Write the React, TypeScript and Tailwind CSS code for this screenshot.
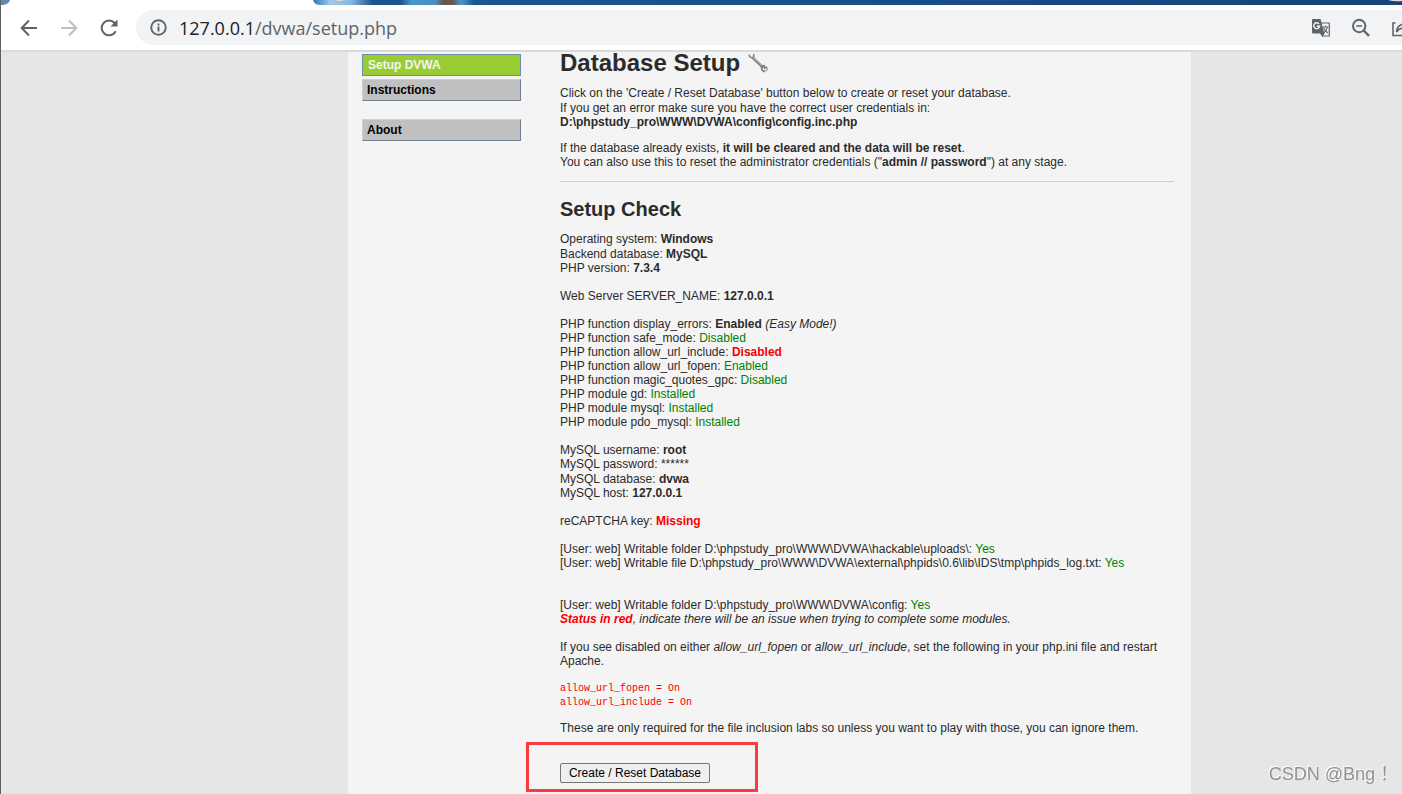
import type { ReactNode } from 'react';

function Good({ children }: { children: ReactNode }) {
  return <span className="text-[#008000]">{children}</span>;
}

function Bad({ children }: { children: ReactNode }) {
  return <span className="font-bold text-[#f80000]">{children}</span>;
}

function TabStrip() {
  return (
    <div className="flex h-[5px] shrink-0 justify-between overflow-hidden">
      <svg className="h-[5px] w-3 shrink-0" viewBox="0 0 12 5" aria-hidden="true">
        <path d="M0 0h9C8 3 5 5 0 5z" fill="#6484b4" />
      </svg>
      <div className="w-[300px] shrink-0" />
      <svg className="h-[5px] min-w-0 flex-1" viewBox="0 0 1090 5" preserveAspectRatio="none" aria-hidden="true">
        <defs>
          <linearGradient id="sky" x1="0" x2="1">
            <stop offset="0" stopColor="#2878b8" />
            <stop offset="0.016" stopColor="#a4c8e6" />
            <stop offset="0.035" stopColor="#86b6de" />
            <stop offset="0.055" stopColor="#1c5290" />
            <stop offset="0.08" stopColor="#1c5290" />
            <stop offset="0.09" stopColor="#4694cc" />
            <stop offset="0.112" stopColor="#4a90c4" />
            <stop offset="0.12" stopColor="#6b564c" />
            <stop offset="0.128" stopColor="#6b564c" />
            <stop offset="0.136" stopColor="#4898d0" />
            <stop offset="0.148" stopColor="#1c5694" />
            <stop offset="1" stopColor="#174478" />
          </linearGradient>
        </defs>
        <path d="M0 0h1090v5H8C3 5 1 3 0 0z" fill="url(#sky)" />
        <path d="M22 0h10q-5 2-10 0M1076 0h14v1q-7 1-14-1" fill="#e8ddd4" />
      </svg>
    </div>
  );
}

function Toolbar() {
  return (
    <header className="flex h-[47px] shrink-0 items-center border-b-2 border-[#dadada] bg-white pl-[18px] text-[#5f6368]">
      <button type="button" aria-label="Back" className="mr-5 size-5">
        <svg viewBox="0 0 20 20" className="size-5" fill="none" stroke="currentColor" strokeWidth="2">
          <path d="M18 10H3M10 2.500 2.700 10l7.300 7.500" />
        </svg>
      </button>
      <button type="button" aria-label="Forward" className="mr-5 size-5 text-[#bdbfc1]">
        <svg viewBox="0 0 20 20" className="size-5" fill="none" stroke="currentColor" strokeWidth="2">
          <path d="M2 10h15M10 2.500l7.300 7.500-7.300 7.500" />
        </svg>
      </button>
      <button type="button" aria-label="Reload" className="mr-[17px] size-5">
        <svg viewBox="0 0 20 20" className="size-5" fill="none" stroke="currentColor" strokeWidth="2">
          <path d="M16.700 13.200A7.400 7.400 0 1 1 15.600 5" />
          <path d="M18.500 1.500v7h-7z" fill="currentColor" stroke="none" />
        </svg>
      </button>
      <div className="flex h-[35px] min-w-0 flex-1 items-center overflow-hidden rounded-l-full bg-[#f1f3f4] pl-[14px]">
        <svg viewBox="0 0 18 18" className="mr-3 size-[17px] shrink-0" fill="none" stroke="currentColor" strokeWidth="2" aria-hidden="true">
          <circle cx="9" cy="9" r="7.700" />
          <path d="M9 8v5.200M9 4.800v2" />
        </svg>
        <a href="#setup" className="min-w-0 flex-1 font-['Open_Sans',sans-serif] text-[18px] leading-6">
          <span className="text-[#202124]">127.0.0.1</span>/dvwa/setup.php
        </a>
        <button type="button" aria-label="Translate this page" className="mr-5 size-5 shrink-0">
          <svg viewBox="0 0 20 20" className="size-5">
            <path d="M9 5h9.300v13H11" fill="#f1f3f4" stroke="currentColor" strokeWidth="1.200" />
            <path d="M2 1h7.500l4 14.500H2q-1 0-1-1V2q0-1 1-1M9 15.500h4.500l-2 3.500z" fill="currentColor" />
            <path d="M8 6A2.900 2.900 0 1 0 8.500 8.300H5.800" fill="none" stroke="#f1f3f4" strokeWidth="1.500" />
            <path d="M11.500 9H17.500M14.500 7.500v1.500M16.500 9q-.8 3.500-3.700 6M12.700 10q1.500 3 4 5" fill="none" stroke="currentColor" strokeWidth="1.100" />
          </svg>
        </button>
        <button type="button" aria-label="Zoom" className="mr-5 size-5 shrink-0">
          <svg viewBox="0 0 20 20" className="size-5" fill="none" stroke="currentColor" strokeWidth="2">
            <circle cx="8.200" cy="8" r="6.200" />
            <path d="m12.700 12.500 5.300 5.300" strokeWidth="2.400" />
            <path d="M5.200 8h6" strokeWidth="1.600" />
          </svg>
        </button>
        <button type="button" aria-label="Share" className="h-5 w-[11px] shrink-0 overflow-hidden">
          <svg viewBox="0 0 20 20" className="size-5" fill="none" stroke="currentColor" strokeWidth="1.600">
            <path d="M4.500 5H2v12.500h15v-3M5.500 14q.5-7 7.500-8V2.500l6 6-6 5V10q-5 0-7.500 4z" />
          </svg>
        </button>
      </div>
    </header>
  );
}

function Sidebar() {
  const item =
    'block h-[22px] border border-t-[#d0d0d0] border-r-[#708090] border-b-[#708090] border-l-[#d0d0d0] bg-[#c0c0c0] px-1 leading-5 font-bold text-black';
  return (
    <nav className="w-[159px] shrink-0 pt-0.5 text-[12px]">
      <a href="#setup" className="block h-[22px] border border-[#708db0] bg-[#99cc33] px-[5px] leading-5 font-bold text-[#f4f4f4]">
        Setup DVWA
      </a>
      <a href="#instructions" className={`${item} mt-[3px]`}>Instructions</a>
      <a href="#about" className={`${item} mt-[18px]`}>About</a>
    </nav>
  );
}

function Wrench() {
  return (
    <svg viewBox="0 0 20 20" className="ml-2 h-5 w-5" aria-hidden="true">
      <path d="m4.500 4.500 10.500 10" stroke="#858585" strokeWidth="2.600" />
      <path d="m5.500 4.700 9.500 9" stroke="#b8b8b8" strokeWidth="0.800" />
      <path d="M1 1.500q.5 3.200 3.500 3.300Q6.500 3.500 5.500 1" fill="none" stroke="#8a8a8a" strokeWidth="1.600" />
      <path d="M19 14.200l-2.300.8-.7-2.300q-2.600.3-2.300 2.800t3 3" fill="none" stroke="#7c7c7c" strokeWidth="1.800" />
      <path d="m17 18.500 2.200-1.500v-2.500" fill="none" stroke="#a0a0a0" strokeWidth="1.200" />
    </svg>
  );
}

export default function App() {
  return (
    <div className="flex h-screen flex-col overflow-hidden border-l border-[#606060] bg-white font-['Liberation_Sans',Arial,sans-serif]">
      <TabStrip />
      <Toolbar />
      <div className="min-h-0 flex-1 overflow-hidden bg-[#e6e6e6] pl-[347px]">
        <div className="flex min-h-full w-[843px] max-w-full bg-[#f4f4f4] pl-[14px]">
          <Sidebar />
          <main className="ml-[39px] w-[614px] text-[12px] leading-[14px] text-[#2b2b2b]">
            <h1 className="flex h-[22px] items-center text-[24px] leading-[22px] font-bold">
              Database Setup <Wrench />
            </h1>
            <p className="mt-3">
              Click on the 'Create / Reset Database' button below to create or reset your database.
            </p>
            <p className="mt-px">
              If you get an error make sure you have the correct user credentials in:
              <br />
              <strong>D:\phpstudy_pro\WWW\DVWA\config\config.inc.php</strong>
            </p>
            <p className="mt-3">
              If the database already exists, <strong>it will be cleared and the data will be reset</strong>.
              <br />
              You can also use this to reset the administrator credentials ("<strong>admin // password</strong>") at any stage.
            </p>
            <hr className="mt-3 border-[#cfcfcf]" />
            <h2 className="mt-[15px] text-[20px] leading-6 font-bold">Setup Check</h2>
            <p className="mt-[11px]">Operating system: <strong>Windows</strong></p>
            <p className="mt-px">
              Backend database: <strong>MySQL</strong>
              <br />
              PHP version: <strong>7.3.4</strong>
            </p>
            <p className="mt-[14px]">Web Server SERVER_NAME: <strong>127.0.0.1</strong></p>
            <p className="mt-[14px]">
              PHP function display_errors: <strong>Enabled</strong> <em>(Easy Mode!)</em>
              <br />
              PHP function safe_mode: <Good>Disabled</Good>
              <br />
              PHP function allow_url_include: <Bad>Disabled</Bad>
              <br />
              PHP function allow_url_fopen: <Good>Enabled</Good>
              <br />
              PHP function magic_quotes_gpc: <Good>Disabled</Good>
              <br />
              PHP module gd: <Good>Installed</Good>
              <br />
              PHP module mysql: <Good>Installed</Good>
              <br />
              PHP module pdo_mysql: <Good>Installed</Good>
            </p>
            <p className="mt-[14px]">
              MySQL username: <strong>root</strong>
              <br />
              MySQL password: ******
            </p>
            <p className="mt-px">
              MySQL database: <strong>dvwa</strong>
              <br />
              MySQL host: <strong>127.0.0.1</strong>
            </p>
            <p className="mt-[14px]">reCAPTCHA key: <Bad>Missing</Bad></p>
            <p className="mt-[14px]">
              [User: web] Writable folder D:\phpstudy_pro\WWW\DVWA\hackable\uploads\: <Good>Yes</Good>
              <br />
              [User: web] Writable file D:\phpstudy_pro\WWW\DVWA\external\phpids\0.6\lib\IDS\tmp\phpids_log.txt: <Good>Yes</Good>
            </p>
            <p className="mt-7">
              [User: web] Writable folder D:\phpstudy_pro\WWW\DVWA\config: <Good>Yes</Good>
              <br />
              <em><Bad>Status in red</Bad>, indicate there will be an issue when trying to complete some modules.</em>
            </p>
            <p className="mt-[14px]">
              If you see disabled on either <em>allow_url_fopen</em> or <em>allow_url_include</em>, set the following in your php.ini file and restart Apache.
            </p>
            <pre className="mt-[14px] font-['Liberation_Mono',monospace] text-[10px] leading-[14px] text-[#f80000]">
              <code>{'allow_url_fopen = On\nallow_url_include = On'}</code>
            </pre>
            <p className="mt-[11px]">
              These are only required for the file inclusion labs so unless you want to play with those, you can ignore them.
            </p>
            <form className="relative mt-7">
              <button type="button" className="block h-5 w-[150px] rounded-[2px] border border-[#767676] bg-[#efefef] text-[12px] leading-4 text-black">
                Create / Reset Database
              </button>
              <div className="pointer-events-none absolute -top-[21px] -left-[34px] h-[50px] w-[232px] border-3 border-[#fb3b3b]" />
            </form>
          </main>
        </div>
      </div>
      <div className="fixed right-1 bottom-2 font-['Liberation_Sans','Noto_Sans_CJK_SC',sans-serif] text-[18px] leading-6 text-[#929292] [text-shadow:-1px_-1px_0_#fff]">
        CSDN @Bng <span lang="zh-CN">！</span>
      </div>
    </div>
  );
}
